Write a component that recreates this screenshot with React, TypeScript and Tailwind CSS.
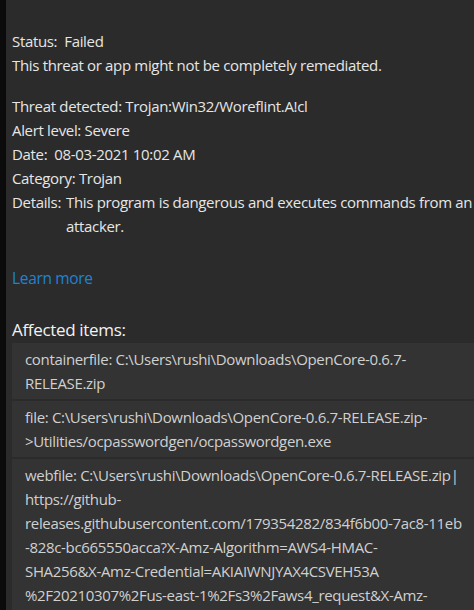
import React from 'react';

interface AffectedItem {
  id: string;
  lines: string[];
}

const affectedItems: AffectedItem[] = [
  {
    id: 'container',
    lines: ['containerfile: C:\\Users\\rushi\\Downloads\\OpenCore-0.6.7-', 'RELEASE.zip'],
  },
  {
    id: 'file',
    lines: ['file: C:\\Users\\rushi\\Downloads\\OpenCore-0.6.7-RELEASE.zip-', '>Utilities/ocpasswordgen/ocpasswordgen.exe'],
  },
  {
    id: 'web',
    lines: [
      'webfile: C:\\Users\\rushi\\Downloads\\OpenCore-0.6.7-RELEASE.zip|',
      'https://github-',
      'releases.githubusercontent.com/179354282/834f6b00-7ac8-11eb',
      '-828c-bc665550acca?X-Amz-Algorithm=AWS4-HMAC-',
      'SHA256&X-Amz-Credential=AKIAIWNJYAX4CSVEH53A',
      '%2F20210307%2Fus-east-1%2Fs3%2Faws4_request&X-Amz-',
      'Date=20210307T203237Z&X-Amz-Expires=300&X-Amz-',
    ],
  },
];

export default function App() {
  return (
    <div
      className="flex h-[610px] w-[474px] overflow-hidden bg-[#2b2b2b] text-[15px] leading-[24px] tracking-[-0.33px] text-[#e6e6e6]"
      style={{ fontFamily: '"Open Sans", "Noto Sans", sans-serif' }}
    >
      <div className="w-[6px] shrink-0 bg-[#0b0b0b]" />
      <div className="flex-1 pl-[6px] pr-[6px] pt-[29px]">
        <div className="flex gap-[7px]">
          <span>Status:</span>
          <span>Failed</span>
        </div>
        <div>This threat or app might not be completely remediated.</div>

        <div className="mt-[17px]">Threat detected: Trojan:Win32/Woreflint.A!cl</div>
        <div>Alert level: Severe</div>
        <div className="flex gap-[7px]">
          <span>Date:</span>
          <span>08-03-2021 10:02 AM</span>
        </div>
        <div>Category: Trojan</div>
        <div className="flex gap-[5px]">
          <span className="shrink-0">Details:</span>
          <span className="whitespace-nowrap">
            This program is dangerous and executes commands from an
            <br />
            attacker.
          </span>
        </div>

        <div className="mt-[28px] text-[15.5px] text-[#1f82d4]">Learn more</div>

        <div className="mt-[28px] text-[17px] leading-[24px] text-[#f2f2f2]">Affected items:</div>
        <div className="mt-[1px] flex flex-col gap-[2px]">
          {affectedItems.map((item) => (
            <div key={item.id} className="bg-[#333333] px-[13px] py-[4px] text-[#d0d0d0]">
              {item.lines.map((line, i) => (
                <div key={i} className="whitespace-nowrap">{line}</div>
              ))}
            </div>
          ))}
        </div>
      </div>
    </div>
  );
}
